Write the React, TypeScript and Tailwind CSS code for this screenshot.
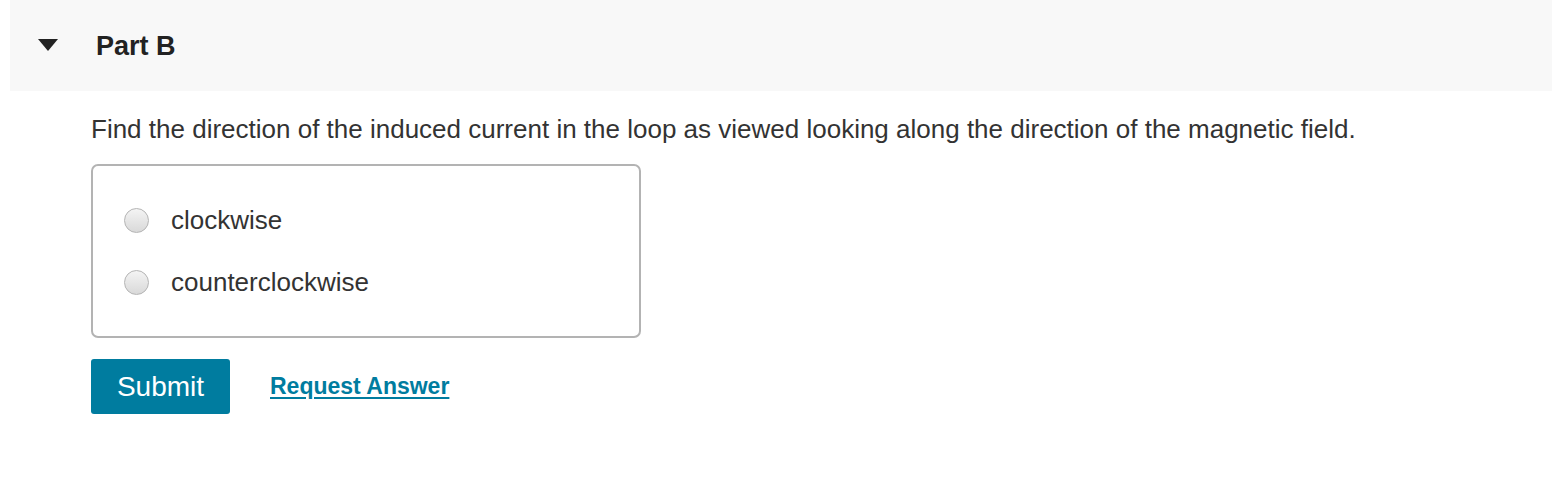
import { useState } from "react";

const OPTIONS = ["clockwise", "counterclockwise"];

function Radio({ checked }: { checked: boolean }) {
  return (
    <span className="flex h-[25px] w-[25px] shrink-0 items-center justify-center rounded-full border border-[#b4b4b4] bg-gradient-to-b from-[#f4f4f4] to-[#d9d9d9]">
      {checked && <span className="h-[11px] w-[11px] rounded-full bg-[#333]" />}
    </span>
  );
}

export default function App() {
  const [picked, setPicked] = useState<string | null>(null);

  return (
    <div className="min-h-[492px] w-full bg-white font-['Liberation_Sans',Arial,sans-serif] text-[#333]">
      {/* part header */}
      <div className="ml-[10px] flex h-[91px] items-center bg-[#f8f8f8]">
        <svg width="20" height="12" viewBox="0 0 20 12" className="ml-[28px] mt-[-1px]">
          <path d="M0 0 H20 L10 12 Z" fill="#222" />
        </svg>
        <h2 className="ml-[38px] mt-[2px] text-[27px] font-bold text-[#222]">Part B</h2>
      </div>

      <div className="pl-[91px]">
        <p className="mt-[23px] text-[26px] leading-[30px]">
          Find the direction of the induced current in the loop as viewed looking along the direction of the magnetic field.
        </p>

        <div className="mt-[20px] flex h-[174px] w-[550px] flex-col justify-center gap-[37px] rounded-[7px] border-2 border-[#b3b3b3] pl-[31px]">
          {OPTIONS.map((opt) => (
            <label
              key={opt}
              className="flex cursor-pointer items-center gap-[22px]"
              onClick={() => setPicked(opt)}
            >
              <Radio checked={picked === opt} />
              <span className="text-[26px] leading-[25px]">{opt}</span>
            </label>
          ))}
        </div>

        <div className="mt-[21px] flex items-center">
          <button className="h-[55px] w-[139px] rounded-[3px] bg-[#007c9f] text-[28px] text-white">
            Submit
          </button>
          <a
            href="#"
            className="ml-[40px] text-[23px] font-bold text-[#007c9f] underline underline-offset-[3px]"
          >
            Request Answer
          </a>
        </div>
      </div>
    </div>
  );
}
